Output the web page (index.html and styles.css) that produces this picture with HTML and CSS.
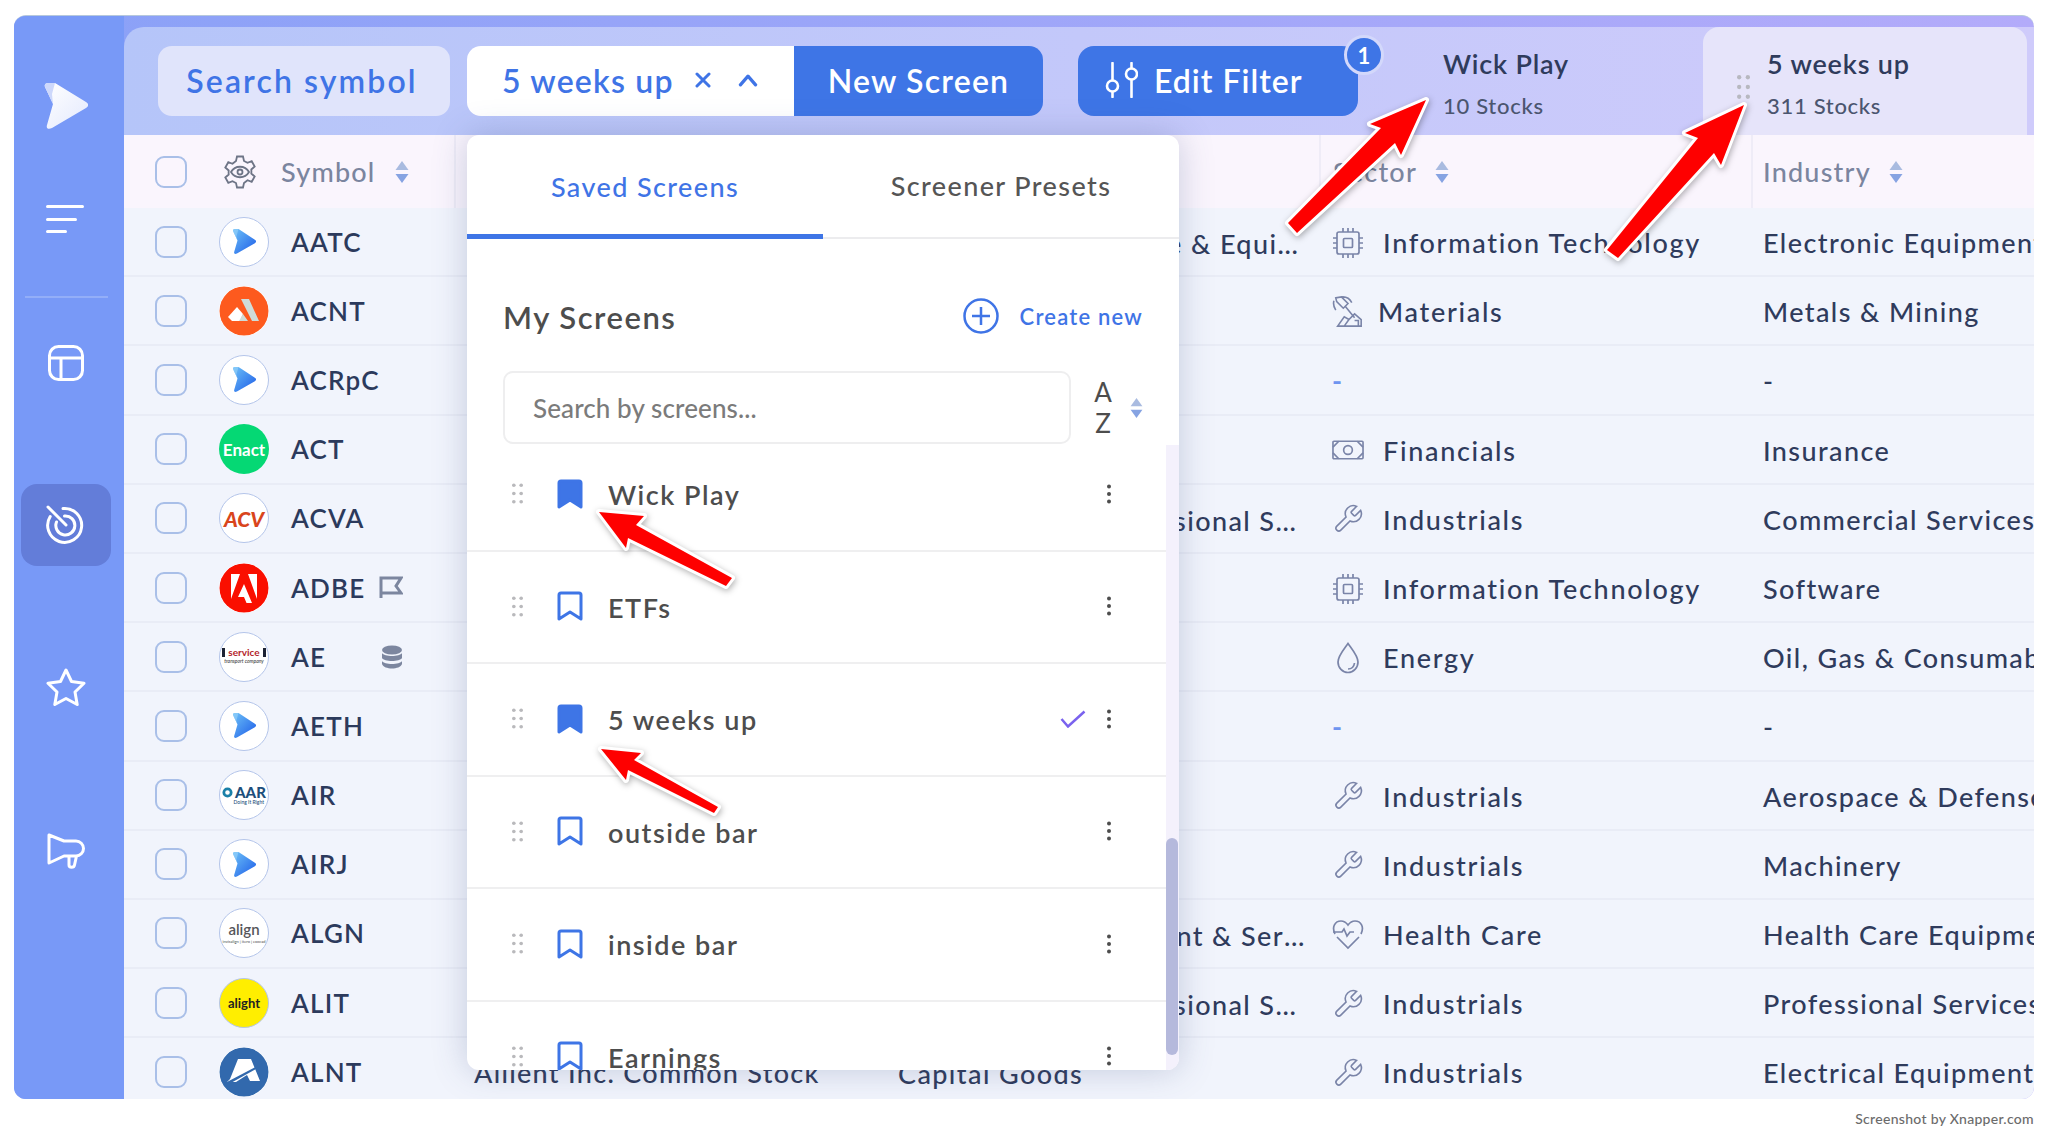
FILE: index.html
```html
<!DOCTYPE html>
<html lang="en">
<head>
    <meta charset="UTF-8">
    <title>Screener</title>
    <link rel="stylesheet" href="styles.css">
</head>
<body>
    <!-- shared icons -->
    <svg class="defs" aria-hidden="true">
        <defs>
            <linearGradient id="g-play" x1="0" y1="0" x2="1" y2="1">
                <stop offset="0" stop-color="#6cc0f7"/>
                <stop offset="1" stop-color="#1d5ce8"/>
            </linearGradient>
            <linearGradient id="g-logo" x1="0" y1="0" x2="1" y2="1">
                <stop offset="0" stop-color="#ffffff"/>
                <stop offset="1" stop-color="#e3e9fd"/>
            </linearGradient>
        </defs>
        <symbol id="i-play" viewBox="0 0 44 46">
            <path fill="url(#g-play)" d="M2 4C1 1 3 0 6 0h6l30 20c3 2 3 4 0 6L9 45c-4 2-6 0-5-3l6-21z"/>
            <path fill="#9fd6fa" opacity=".55" d="M2 4C1 1 3 0 6 0h6L8 14l2 7z"/>
        </symbol>
        <symbol id="i-wrench" viewBox="0 0 24 24">
            <path stroke-width="1.200" d="M14.700 6.300a1 1 0 0 0 0 1.400l1.600 1.600a1 1 0 0 0 1.400 0l3.770-3.770a6 6 0 0 1-7.940 7.940l-6.910 6.910a2.120 2.120 0 0 1-3-3l6.910-6.910a6 6 0 0 1 7.940-7.940l-3.760 3.760z"/>
        </symbol>
        <symbol id="i-chip" viewBox="0 0 30 32">
            <rect x="4" y="5" width="22" height="22" rx="2"/>
            <rect x="10.500" y="11.500" width="9" height="9" rx="1"/>
            <path d="M10 1v4M15 1v4M20 1v4M10 27v4M15 27v4M20 27v4M0 11h4M0 16h4M0 21h4M26 11h4M26 16h4M26 21h4"/>
        </symbol>
        <symbol id="i-money" viewBox="0 0 33 20">
            <rect x="1" y="1" width="31" height="18" rx="1"/>
            <circle cx="16.500" cy="10" r="4.500"/>
            <path d="M1 7l6-6M1 13l6 6M32 7l-6-6M32 13l-6 6"/>
        </symbol>
        <symbol id="i-drop" viewBox="0 0 26 32">
            <path d="M13 1.500c5 7 10 12.500 10 18.500a10 10.500 0 0 1-20 0C3 14 8 8.500 13 1.500z"/>
            <path d="M13 27c3.500 0 6-2.500 6.500-6"/>
        </symbol>
        <symbol id="i-heart" viewBox="0 0 32 30">
            <path d="M3 15C-.5 8 3 2 9 2c3.500 0 5.500 2 7 4 1.500-2 3.500-4 7-4 6 0 9.500 6 6 13M5 18l11 11 11-11"/>
            <path d="M1 13h9l2-3 3 7 3-4h4"/>
        </symbol>
        <symbol id="i-mine" viewBox="0 0 32 34">
            <path d="M3 2l6-1 7 7-5 5-7-7zM13 11l10 12M9 1c5-.5 9 2 11 6M1 5c-1 4 0 7 2 10"/>
            <path d="M5 32l7-10 5 3 6-6 7 6v7zM12 32l5-7M23 26h4v6"/>
        </symbol>
        <symbol id="i-dots" viewBox="0 0 12 22">
            <circle cx="2" cy="2" r="2"/><circle cx="10" cy="2" r="2"/>
            <circle cx="2" cy="11" r="2"/><circle cx="10" cy="11" r="2"/>
            <circle cx="2" cy="20" r="2"/><circle cx="10" cy="20" r="2"/>
        </symbol>
        <symbol id="i-kebab" viewBox="0 0 6 20">
            <circle cx="3" cy="2.500" r="2"/><circle cx="3" cy="10" r="2"/><circle cx="3" cy="17.500" r="2"/>
        </symbol>
        <symbol id="i-sort" viewBox="0 0 14 22">
            <path fill="#a9bbe0" d="M7 0l6.500 9H.5z"/>
            <path fill="#86a3e2" d="M7 22L.5 13h13z"/>
        </symbol>
        <symbol id="i-bookmark" viewBox="0 0 26 30">
            <path d="M2 28V4q0-2 2-2h18q2 0 2 2v24l-11-7z"/>
        </symbol>
    </svg>

    <div class="app">
        <nav class="sidebar">
            <svg class="logo" viewBox="0 0 44 46">
                <path fill="url(#g-logo)" d="M1 4C0 1 2 0 5 0h6l31 19c3 2 3 4 0 6L8 45c-4 2-6 0-5-3l6-21z"/>
                <path fill="#cdd8fb" d="M1 4C0 1 2 0 5 0h6L8 11l1 10z"/>
            </svg>
            <svg class="nav-icon nav-menu" viewBox="0 0 38 28">
                <path d="M1.500 1.500h35M1.500 14.500h28M1.500 26.500h18"/>
            </svg>
            <div class="nav-line"></div>
            <svg class="nav-icon nav-table" viewBox="0 0 36 36">
                <rect x="1.500" y="1.500" width="33" height="33" rx="9"/>
                <path d="M1.500 13h33M13 13v21.500"/>
            </svg>
            <div class="nav-active">
                <svg class="nav-icon nav-radar" viewBox="0 0 40 40">
                    <path d="M17 3.500A17 17 0 1 1 4.200 11.500M18.500 11a9.500 9.500 0 1 1-8 6"/>
                    <path d="M2 2l18 18"/>
                </svg>
            </div>
            <svg class="nav-icon nav-star" viewBox="0 0 40 38">
                <path d="M20 2l5.500 11.500 12.500 1.700-9 8.800 2.200 12.500L20 30.500 8.800 36.500 11 24 2 15.200l12.500-1.700z"/>
            </svg>
            <svg class="nav-icon nav-mega" viewBox="0 0 38 36">
                <path d="M2 2v28l15-7h12a7.500 7.500 0 0 0 0-15H17zM22 23v9c0 3 5 3 5.500 0l2-9"/>
            </svg>
        </nav>

        <main class="main">
            <header class="topbar">
                <div class="search-symbol">Search symbol</div>
                <div class="screen-picker">
                    <div class="screen-select">
                        <span>5 weeks up</span>
                        <svg class="small-icon" viewBox="0 0 16 16"><path d="M2 2l12 12M14 2L2 14"/></svg>
                        <svg class="small-icon" viewBox="0 0 18 12"><path d="M2 10l7-8 7 8"/></svg>
                    </div>
                    <div class="new-screen">New Screen</div>
                </div>
                <div class="edit-filter">
                    <svg class="sliders" viewBox="0 0 33 36">
                        <path d="M7.500 1v17M7.500 30v5M26.500 1v5M26.500 18v17"/>
                        <circle cx="7.500" cy="24" r="5.500"/>
                        <circle cx="26.500" cy="12" r="5.500"/>
                    </svg>
                    <span>Edit Filter</span>
                    <span class="badge">1</span>
                </div>
                <div class="saved-tab">
                    <div class="tab-title">Wick Play</div>
                    <div class="tab-sub">10 Stocks</div>
                </div>
                <div class="saved-tab active">
                    <svg class="tab-dots" viewBox="0 0 12 22"><use href="#i-dots"/></svg>
                    <div class="tab-title">5 weeks up</div>
                    <div class="tab-sub">311 Stocks</div>
                </div>
            </header>

            <section class="table">
                <div class="row head">
                    <div class="cell sym-cell">
                        <span class="check"></span>
                        <svg class="gear" viewBox="0 0 32 34">
                            <path d="M13 1.500h6l1 4.500 3.500 1.800 4.200-1.600 3 5.300-3.400 3 .1 2-.1 2 3.400 3-3 5.300-4.200-1.600L20 28l-1 4.500h-6L12 28l-3.500-1.800-4.200 1.600-3-5.300 3.400-3-.1-2 .1-2-3.400-3 3-5.300 4.200 1.600L12 6z"/>
                            <path d="M7 17c4-7 14-7 18 0-4 7-14 7-18 0z"/>
                            <circle cx="16" cy="17" r="2.500"/>
                        </svg>
                        <span class="head-label">Symbol</span>
                        <svg class="sort sort-symbol"><use href="#i-sort"/></svg>
                    </div>
                    <div class="cell divided"></div>
                    <div class="cell"></div>
                    <div class="cell divided head-sector"><span class="head-label">Sector</span><svg class="sort"><use href="#i-sort"/></svg></div>
                    <div class="cell divided head-industry"><span class="head-label">Industry</span><svg class="sort"><use href="#i-sort"/></svg></div>
                </div>

                <div class="row">
                    <div class="cell sym-cell"><span class="check"></span>
                        <span class="stock-logo"><svg class="play"><use href="#i-play"/></svg></span>
                        <span class="sym">AATC</span></div>
                    <div class="cell name"></div>
                    <div class="cell group">Technology Hardware &amp; Equipment</div>
                    <div class="cell sector"><svg class="sec-icon"><use href="#i-chip"/></svg>Information Technology</div>
                    <div class="cell industry">Electronic Equipment, Instruments &amp; Components</div>
                </div>
                <div class="row">
                    <div class="cell sym-cell"><span class="check"></span>
                        <span class="stock-logo bare">
                            <svg viewBox="0 0 50 50">
                                <circle cx="25" cy="25" r="24.500" fill="#fd5a1e"/>
                                <path fill="#fff" d="M9 31l9-10 6 7-3 7H13z"/>
                                <path fill="#cfdcd8" d="M22 13h8l10 22h-7zM24 28l5 7H20z"/>
                            </svg>
                        </span>
                        <span class="sym">ACNT</span></div>
                    <div class="cell name"></div>
                    <div class="cell group"></div>
                    <div class="cell sector tight"><svg class="sec-icon"><use href="#i-mine"/></svg>Materials</div>
                    <div class="cell industry">Metals &amp; Mining</div>
                </div>
                <div class="row">
                    <div class="cell sym-cell"><span class="check"></span>
                        <span class="stock-logo"><svg class="play"><use href="#i-play"/></svg></span>
                        <span class="sym">ACRpC</span></div>
                    <div class="cell name"></div>
                    <div class="cell group"></div>
                    <div class="cell sector dash">-</div>
                    <div class="cell industry">-</div>
                </div>
                <div class="row">
                    <div class="cell sym-cell"><span class="check"></span>
                        <span class="stock-logo bare enact">Enact</span>
                        <span class="sym">ACT</span></div>
                    <div class="cell name"></div>
                    <div class="cell group"></div>
                    <div class="cell sector"><svg class="sec-icon"><use href="#i-money"/></svg>Financials</div>
                    <div class="cell industry">Insurance</div>
                </div>
                <div class="row">
                    <div class="cell sym-cell"><span class="check"></span>
                        <span class="stock-logo acv">ACV</span>
                        <span class="sym">ACVA</span></div>
                    <div class="cell name"></div>
                    <div class="cell group">Commercial &amp; Professional Services</div>
                    <div class="cell sector"><svg class="sec-icon"><use href="#i-wrench"/></svg>Industrials</div>
                    <div class="cell industry">Commercial Services &amp; Supplies</div>
                </div>
                <div class="row">
                    <div class="cell sym-cell"><span class="check"></span>
                        <span class="stock-logo bare">
                            <svg viewBox="0 0 50 50">
                                <circle cx="25" cy="25" r="24.500" fill="#fa0f00"/>
                                <path fill="#fff" d="M12 11h9L12 36V11zM29 11h9v25zM25 21l8 19h-5.500l-2.500-6h-6z"/>
                            </svg>
                        </span>
                        <span class="sym">ADBE</span>
                        <svg class="sym-flag" viewBox="0 0 24 23"><path d="M2 22V2h20l-5 8 5 7H2"/></svg></div>
                    <div class="cell name"></div>
                    <div class="cell group"></div>
                    <div class="cell sector"><svg class="sec-icon"><use href="#i-chip"/></svg>Information Technology</div>
                    <div class="cell industry">Software</div>
                </div>
                <div class="row">
                    <div class="cell sym-cell"><span class="check"></span>
                        <span class="stock-logo service"><b>service</b><i>transport company</i></span>
                        <span class="sym">AE</span>
                        <svg class="sym-db" viewBox="0 0 22 24">
                            <ellipse cx="11" cy="5" rx="10" ry="4.500"/>
                            <path d="M1 8c2 4 18 4 20 0v5c-2 4-18 4-20 0zM1 16c2 4 18 4 20 0v3c-2 6-18 6-20 0z"/>
                        </svg></div>
                    <div class="cell name"></div>
                    <div class="cell group"></div>
                    <div class="cell sector"><svg class="sec-icon"><use href="#i-drop"/></svg>Energy</div>
                    <div class="cell industry">Oil, Gas &amp; Consumable Fuels</div>
                </div>
                <div class="row">
                    <div class="cell sym-cell"><span class="check"></span>
                        <span class="stock-logo"><svg class="play"><use href="#i-play"/></svg></span>
                        <span class="sym">AETH</span></div>
                    <div class="cell name"></div>
                    <div class="cell group"></div>
                    <div class="cell sector dash">-</div>
                    <div class="cell industry">-</div>
                </div>
                <div class="row">
                    <div class="cell sym-cell"><span class="check"></span>
                        <span class="stock-logo aar"><span class="aar-mark"><svg viewBox="0 0 12 12"><circle cx="6" cy="6" r="4" /></svg>AAR</span><small>Doing It Right</small></span>
                        <span class="sym">AIR</span></div>
                    <div class="cell name"></div>
                    <div class="cell group"></div>
                    <div class="cell sector"><svg class="sec-icon"><use href="#i-wrench"/></svg>Industrials</div>
                    <div class="cell industry">Aerospace &amp; Defense</div>
                </div>
                <div class="row">
                    <div class="cell sym-cell"><span class="check"></span>
                        <span class="stock-logo"><svg class="play"><use href="#i-play"/></svg></span>
                        <span class="sym">AIRJ</span></div>
                    <div class="cell name"></div>
                    <div class="cell group"></div>
                    <div class="cell sector"><svg class="sec-icon"><use href="#i-wrench"/></svg>Industrials</div>
                    <div class="cell industry">Machinery</div>
                </div>
                <div class="row">
                    <div class="cell sym-cell"><span class="check"></span>
                        <span class="stock-logo align">align<small>invisalign | itero | exocad</small></span>
                        <span class="sym">ALGN</span></div>
                    <div class="cell name"></div>
                    <div class="cell group">Health Care Equipment &amp; Services</div>
                    <div class="cell sector"><svg class="sec-icon"><use href="#i-heart"/></svg>Health Care</div>
                    <div class="cell industry">Health Care Equipment &amp; Supplies</div>
                </div>
                <div class="row">
                    <div class="cell sym-cell"><span class="check"></span>
                        <span class="stock-logo alight">alight</span>
                        <span class="sym">ALIT</span></div>
                    <div class="cell name"></div>
                    <div class="cell group">Commercial &amp; Professional Services</div>
                    <div class="cell sector"><svg class="sec-icon"><use href="#i-wrench"/></svg>Industrials</div>
                    <div class="cell industry">Professional Services</div>
                </div>
                <div class="row">
                    <div class="cell sym-cell"><span class="check"></span>
                        <span class="stock-logo bare">
                            <svg viewBox="0 0 50 50">
                                <circle cx="25" cy="25" r="24.500" fill="#3269ad"/>
                                <path fill="#fff" d="M19 12h13l9 22H31l-3-6-11 7H8l3-3z"/>
                                <path fill="#3269ad" d="M6 36l38-20v2L10 37z"/>
                            </svg>
                        </span>
                        <span class="sym">ALNT</span></div>
                    <div class="cell name">Allient Inc. Common Stock</div>
                    <div class="cell group">Capital Goods</div>
                    <div class="cell sector"><svg class="sec-icon"><use href="#i-wrench"/></svg>Industrials</div>
                    <div class="cell industry">Electrical Equipment</div>
                </div>
            </section>

            <!-- dropdown with the saved screens -->
            <aside class="screens-menu">
                <div class="menu-tabs">
                    <div class="menu-tab current">Saved Screens</div>
                    <div class="menu-tab">Screener Presets</div>
                </div>
                <div class="menu-head">
                    <h2>My Screens</h2>
                    <div class="create-new">
                        <svg viewBox="0 0 36 36"><circle cx="18" cy="18" r="16.500"/><path d="M18 9v18M9 18h18"/></svg>
                        Create new
                    </div>
                </div>
                <div class="menu-search">
                    <div class="search-box">Search by screens...</div>
                    <div class="az"><span>A</span><span>Z</span></div>
                    <svg class="sort"><use href="#i-sort"/></svg>
                </div>
                <div class="screen-list">
                    <div class="screen-row">
                        <svg class="drag"><use href="#i-dots"/></svg>
                        <svg class="mark filled"><use href="#i-bookmark"/></svg>
                        <span class="screen-name">Wick Play</span>
                        <svg class="kebab"><use href="#i-kebab"/></svg>
                    </div>
                    <div class="screen-row">
                        <svg class="drag"><use href="#i-dots"/></svg>
                        <svg class="mark"><use href="#i-bookmark"/></svg>
                        <span class="screen-name">ETFs</span>
                        <svg class="kebab"><use href="#i-kebab"/></svg>
                    </div>
                    <div class="screen-row">
                        <svg class="drag"><use href="#i-dots"/></svg>
                        <svg class="mark filled"><use href="#i-bookmark"/></svg>
                        <span class="screen-name">5 weeks up</span>
                        <svg class="tick" viewBox="0 0 26 18"><path d="M1.500 9l6.500 7.500L24.500 1.500"/></svg>
                        <svg class="kebab"><use href="#i-kebab"/></svg>
                    </div>
                    <div class="screen-row">
                        <svg class="drag"><use href="#i-dots"/></svg>
                        <svg class="mark"><use href="#i-bookmark"/></svg>
                        <span class="screen-name">outside bar</span>
                        <svg class="kebab"><use href="#i-kebab"/></svg>
                    </div>
                    <div class="screen-row">
                        <svg class="drag"><use href="#i-dots"/></svg>
                        <svg class="mark"><use href="#i-bookmark"/></svg>
                        <span class="screen-name">inside bar</span>
                        <svg class="kebab"><use href="#i-kebab"/></svg>
                    </div>
                    <div class="screen-row">
                        <svg class="drag"><use href="#i-dots"/></svg>
                        <svg class="mark"><use href="#i-bookmark"/></svg>
                        <span class="screen-name">Earnings</span>
                        <svg class="kebab"><use href="#i-kebab"/></svg>
                    </div>
                </div>
                <div class="scroll-track"><div class="scroll-thumb"></div></div>
            </aside>
        </main>
    </div>

    <footer class="credit">Screenshot by Xnapper.com</footer>

    <!-- red annotation arrows drawn over the screenshot -->
    <svg class="arrows" viewBox="0 0 2048 1140">
        <polygon points="1426,100 1370,124 1381,128 1288,223 1297,233 1395,143 1401,155"/>
        <polygon points="1744,105 1685,133 1698,138 1607,250 1618,258 1714,153 1721,165"/>
        <polygon points="599,512 644,516 636,525 732,578 726,586 628,538 626,548"/>
        <polygon points="601,749 641,753 634,760 718,807 714,813 628,770 626,780"/>
    </svg>
</body>
</html>
```

FILE: styles.css
```css
* {
    box-sizing: border-box;
}

html, body {
    margin: 0;
    height: 1140px;
    overflow: hidden;
}

body {
    padding: 15px 14px 0;
    background: #fff;
    font-family: "Lato", "Noto Sans", sans-serif;
    font-weight: 500;
    color: #2f3b5c;
}

.defs {
    position: absolute;
    width: 0;
    height: 0;
}

.app {
    display: flex;
    height: 1084px;
    border-radius: 12px;
    overflow: hidden;
    border-top: 1px solid #b6c8dc;
    background: linear-gradient(90deg, #8aa1f7, #b3abfa);
}

/* sidebar */
.sidebar {
    width: 110px;
    flex: none;
    display: flex;
    flex-direction: column;
    align-items: center;
    background: #7899f7;
    padding: 67px 6px 0 0;
}

.logo {
    width: 44px;
    height: 46px;
}

.nav-icon {
    display: block;
    fill: none;
    stroke: #fff;
    stroke-width: 3;
    stroke-linecap: round;
    stroke-linejoin: round;
}

.nav-menu {
    width: 38px;
    height: 28px;
    margin-top: 76px;
    margin-left: -2px;
}

.nav-line {
    width: 83px;
    height: 2px;
    margin-top: 63px;
    background: #93aef8;
}

.nav-table {
    width: 36px;
    height: 36px;
    margin-top: 47px;
}

.nav-active {
    width: 90px;
    height: 82px;
    margin-top: 103px;
    border-radius: 16px;
    background: #637dd9;
    display: flex;
    align-items: center;
    justify-content: center;
}

.nav-radar {
    width: 40px;
    height: 40px;
}

.nav-star {
    width: 40px;
    height: 38px;
    margin-top: 102px;
}

.nav-mega {
    width: 38px;
    height: 36px;
    margin-top: 127px;
}

/* top bar */
.main {
    position: relative;
    flex: 1;
    min-width: 0;
    padding-top: 11px;
    display: flex;
    flex-direction: column;
}

.topbar {
    height: 108px;
    flex: none;
    display: flex;
    align-items: center;
    padding-left: 34px;
    border-radius: 20px 0 0 0;
    background: linear-gradient(90deg, #b5c5f9, #c3c8fa 50%, #cfcbfb);
    font-size: 32px;
    font-weight: 600;
    letter-spacing: 1.200px;
}

.search-symbol {
    width: 292px;
    height: 70px;
    padding: 0 4px 2px 0;
    border-radius: 14px;
    background: #e0e4fb;
    color: #3f74e6;
    letter-spacing: 2.100px;
    display: flex;
    align-items: center;
    justify-content: center;
}

.screen-picker {
    display: flex;
    height: 70px;
    margin-left: 17px;
}

.screen-select {
    width: 327px;
    padding: 0 0 2px 35px;
    display: flex;
    align-items: center;
    background: #fff;
    color: #3f74e6;
    border-radius: 14px 0 0 14px;
}

.small-icon {
    width: 16px;
    height: 16px;
    margin-left: 21px;
    fill: none;
    stroke: #3f74e6;
    stroke-width: 3;
    stroke-linecap: round;
    stroke-linejoin: round;
}

.small-icon + .small-icon {
    width: 20px;
    height: 13px;
    margin-left: 27px;
}

.new-screen {
    width: 249px;
    padding-bottom: 2px;
    display: flex;
    align-items: center;
    justify-content: center;
    background: #3e75e6;
    color: #fff;
    border-radius: 0 14px 14px 0;
}

.edit-filter {
    position: relative;
    width: 280px;
    height: 70px;
    margin-left: 35px;
    padding: 0 0 2px 27px;
    display: flex;
    align-items: center;
    border-radius: 16px;
    background: #3e75e6;
    color: #fff;
    letter-spacing: 1px;
}

.sliders {
    width: 33px;
    height: 36px;
    margin-right: 16px;
    fill: none;
    stroke: #fff;
    stroke-width: 2.600;
    stroke-linecap: round;
}

.badge {
    position: absolute;
    right: -26px;
    top: -11px;
    width: 40px;
    height: 40px;
    border-radius: 50%;
    border: 3px solid #d3d8fb;
    background: #3e75e6;
    display: flex;
    align-items: center;
    justify-content: center;
    font-size: 22px;
    font-weight: 700;
    letter-spacing: 0;
}

.saved-tab {
    position: relative;
    align-self: stretch;
    padding: 21px 0 0 85px;
    width: 345px;
    letter-spacing: .7px;
}

.saved-tab.active {
    width: 324px;
    padding-left: 64px;
    margin-right: 7px;
    border-radius: 16px 16px 0 0;
    background: #e6e4fa;
}

.tab-title {
    font-size: 27px;
    line-height: 32px;
    font-weight: 600;
    letter-spacing: .8px;
    color: #2f3b5c;
}

.tab-sub {
    margin-top: 12px;
    font-size: 22px;
    line-height: 28px;
    font-weight: 500;
    color: #4b556f;
}

.tab-dots {
    position: absolute;
    left: 34px;
    top: 46px;
    width: 13px;
    height: 28px;
    fill: #b7b8c0;
}

/* table */
.table {
    flex: 1;
    overflow: hidden;
    background: #f1f4fc;
}

.row {
    display: grid;
    grid-template-columns: 330px 426px 439px 432px 283px;
    height: 69.2px;
    border-bottom: 2px solid #e9ecf6;
    font-size: 27px;
    letter-spacing: 1.400px;
}

.row.head {
    height: 73px;
    background: #faf5fd;
    border-bottom: 0;
}

.cell {
    display: flex;
    align-items: center;
    min-width: 0;
    white-space: nowrap;
    overflow: hidden;
}

.divided {
    border-left: 2px solid #efecf7;
}

.sym-cell {
    padding-left: 31px;
}

.check {
    width: 32px;
    height: 32px;
    flex: none;
    border: 2px solid #a9bfe8;
    border-radius: 9px;
}

.gear {
    width: 32px;
    height: 34px;
    margin-left: 37px;
    fill: none;
    stroke: #6d7486;
    stroke-width: 1.800;
}

.head-label {
    font-weight: 500;
    letter-spacing: 1.200px;
    color: #7b859f;
}

.sym-cell .head-label {
    margin-left: 25px;
}

.sort {
    width: 14px;
    height: 22px;
    flex: none;
    margin-left: 18px;
}

.sort-symbol {
    margin-left: 19px;
}

.head-sector {
    padding-left: 12px;
}

.head-industry {
    padding-left: 10px;
}

.stock-logo {
    width: 50px;
    height: 50px;
    flex: none;
    margin-left: 32px;
    border-radius: 50%;
    background: #fff;
    border: 1.500px solid #b4c5ea;
    display: flex;
    align-items: center;
    justify-content: center;
    letter-spacing: 0;
    overflow: hidden;
}

.stock-logo.bare {
    border: 0;
}

.stock-logo svg {
    width: 50px;
    height: 50px;
}

.stock-logo .play {
    width: 24px;
    height: 25px;
}

.enact {
    background: #05d874;
    color: #fff;
    font-size: 17px;
    font-weight: 700;
}

.acv {
    color: #d9451c;
    font-size: 21px;
    font-weight: 900;
    font-style: italic;
}

.service {
    flex-direction: column;
    line-height: 9px;
}

.service b {
    font-size: 10px;
    color: #b3242c;
    border-left: 3px solid #1c2233;
    border-right: 3px solid #1c2233;
    padding: 0 3px;
}

.service i {
    font-size: 5px;
    color: #444;
    white-space: nowrap;
}

.aar {
    flex-direction: column;
    line-height: 14px;
    color: #1d4f7c;
    font-size: 15px;
    font-weight: 900;
}

.aar-mark {
    display: flex;
    align-items: center;
}

.aar svg {
    width: 11px;
    height: 11px;
    margin-right: 2px;
    fill: none;
    stroke: #1a80a8;
    stroke-width: 3;
}

.aar small {
    align-self: flex-end;
    margin-right: 4px;
    font-size: 5px;
    line-height: 6px;
    font-weight: 500;
}

.align {
    flex-direction: column;
    line-height: 17px;
    color: #55565a;
    font-size: 15px;
    font-weight: 600;
}

.align small {
    font-size: 4px;
    line-height: 8px;
    font-weight: 500;
    white-space: nowrap;
}

.alight {
    background: #ffee00;
    color: #222;
    font-size: 13px;
    font-weight: 700;
}

.sym {
    width: 88px;
    margin-left: 22px;
    flex: none;
    font-size: 26px;
    font-weight: 600;
    letter-spacing: 1.200px;
    color: #2c3a5c;
}

.sym-flag {
    width: 24px;
    height: 23px;
    fill: none;
    stroke: #7c869f;
    stroke-width: 3;
}

.sym-db {
    width: 22px;
    height: 24px;
    margin-left: 2px;
    fill: #7c869f;
}

.name {
    padding: 2px 0 0 20px;
    letter-spacing: 1.300px;
}

.group {
    display: block;
    padding: 2px 10px 0 18px;
    line-height: 67px;
    text-overflow: ellipsis;
}

.sector {
    padding: 2px 0 0 13px;
    letter-spacing: 1.700px;
}

.sec-icon {
    width: 32px;
    height: 32px;
    flex: none;
    margin-right: 19px;
    fill: none;
    stroke: #7a84a8;
    stroke-width: 1.700;
}

.sector.tight .sec-icon {
    margin-right: 14px;
}

.dash {
    color: #6f94f0;
    font-weight: 700;
}

.industry {
    padding: 2px 0 0 12px;
}

/* saved screens dropdown */
.screens-menu {
    position: absolute;
    left: 343px;
    top: 119px;
    width: 712px;
    height: 935px;
    display: flex;
    flex-direction: column;
    overflow: hidden;
    background: #fff;
    border-radius: 12px;
    box-shadow: 0 0 34px rgba(62, 80, 130, .26);
    color: #4d4d4d;
}

.menu-tabs {
    display: flex;
    height: 104px;
    flex: none;
    border-bottom: 2px solid #ececee;
}

.menu-tab {
    width: 356px;
    display: flex;
    align-items: center;
    justify-content: center;
    padding-bottom: 1px;
    font-size: 27px;
    letter-spacing: 1.400px;
    color: #555;
}

.menu-tab.current {
    color: #3f74e6;
    box-shadow: inset 0 -5px 0 #3e75e6;
    margin-bottom: -2px;
    height: 104px;
}

.menu-head {
    height: 132px;
    flex: none;
    padding: 24px 36px 0;
    display: flex;
    align-items: center;
    justify-content: space-between;
}

.menu-head h2 {
    margin: 0;
    font-size: 31px;
    font-weight: 600;
    letter-spacing: 1.500px;
    color: #4d4d4d;
}

.create-new {
    display: flex;
    align-items: center;
    gap: 21px;
    margin-top: -2px;
    font-size: 22px;
    font-weight: 600;
    letter-spacing: 1.200px;
    color: #3f74e6;
}

.create-new svg {
    width: 36px;
    height: 36px;
    fill: none;
    stroke: #3f74e6;
    stroke-width: 2.500;
}

.menu-search {
    display: flex;
    align-items: center;
    height: 73px;
    flex: none;
    padding-left: 36px;
}

.search-box {
    width: 568px;
    height: 73px;
    padding-left: 28px;
    display: flex;
    align-items: center;
    border: 2px solid #eeeeef;
    border-radius: 10px;
    font-size: 26px;
    letter-spacing: .1px;
    color: #7b7b7b;
}

.az {
    width: 24px;
    margin-left: 20px;
    display: flex;
    flex-direction: column;
    align-items: center;
    font-size: 26px;
    line-height: 31px;
    font-weight: 400;
}

.az + .sort {
    width: 13px;
    height: 20px;
    margin-left: 15px;
}

.screen-list {
    margin-top: -5px;
}

.screen-row {
    height: 112.500px;
    padding: 0 54px 1px 45px;
    margin-right: 13px;
    display: flex;
    align-items: center;
    border-bottom: 2px solid #efeff0;
}

.drag {
    width: 11px;
    height: 21px;
    flex: none;
    fill: #b9b9bc;
}

.mark {
    width: 26px;
    height: 30px;
    flex: none;
    margin-left: 34px;
    fill: none;
    stroke: #3e75e6;
    stroke-width: 3;
    stroke-linejoin: round;
}

.mark.filled {
    fill: #3e75e6;
}

.screen-name {
    margin: 2px 0 0 25px;
    font-size: 27px;
    font-weight: 600;
    letter-spacing: 1.500px;
    color: #4d4d4d;
}

.tick {
    width: 26px;
    height: 18px;
    margin-left: auto;
    margin-right: 20px;
    fill: none;
    stroke: #7a62ee;
    stroke-width: 2.500;
}

.kebab {
    width: 6px;
    height: 20px;
    margin-left: auto;
    fill: #4d4d4d;
}

.tick + .kebab {
    margin-left: 0;
}

.scroll-track {
    position: absolute;
    right: 0;
    top: 310px;
    bottom: 0;
    width: 13px;
    background: #f4f1fc;
}

.scroll-thumb {
    position: absolute;
    left: 0;
    right: 1px;
    bottom: 15px;
    height: 217px;
    border-radius: 6px;
    background: #b5b9dc;
}

/* footer */
.credit {
    margin-top: 11px;
    text-align: right;
    font-size: 14px;
    letter-spacing: .3px;
    line-height: 18px;
    color: #6b6b6b;
}

/* annotations */
.arrows {
    position: absolute;
    left: 0;
    top: 0;
    width: 2048px;
    height: 1140px;
    pointer-events: none;
    filter: drop-shadow(1px 2px 3px rgba(0, 0, 0, .3));
}

.arrows polygon {
    fill: #fe0000;
    stroke: #fff;
    stroke-width: 6;
    stroke-linejoin: round;
    paint-order: stroke;
}
```
